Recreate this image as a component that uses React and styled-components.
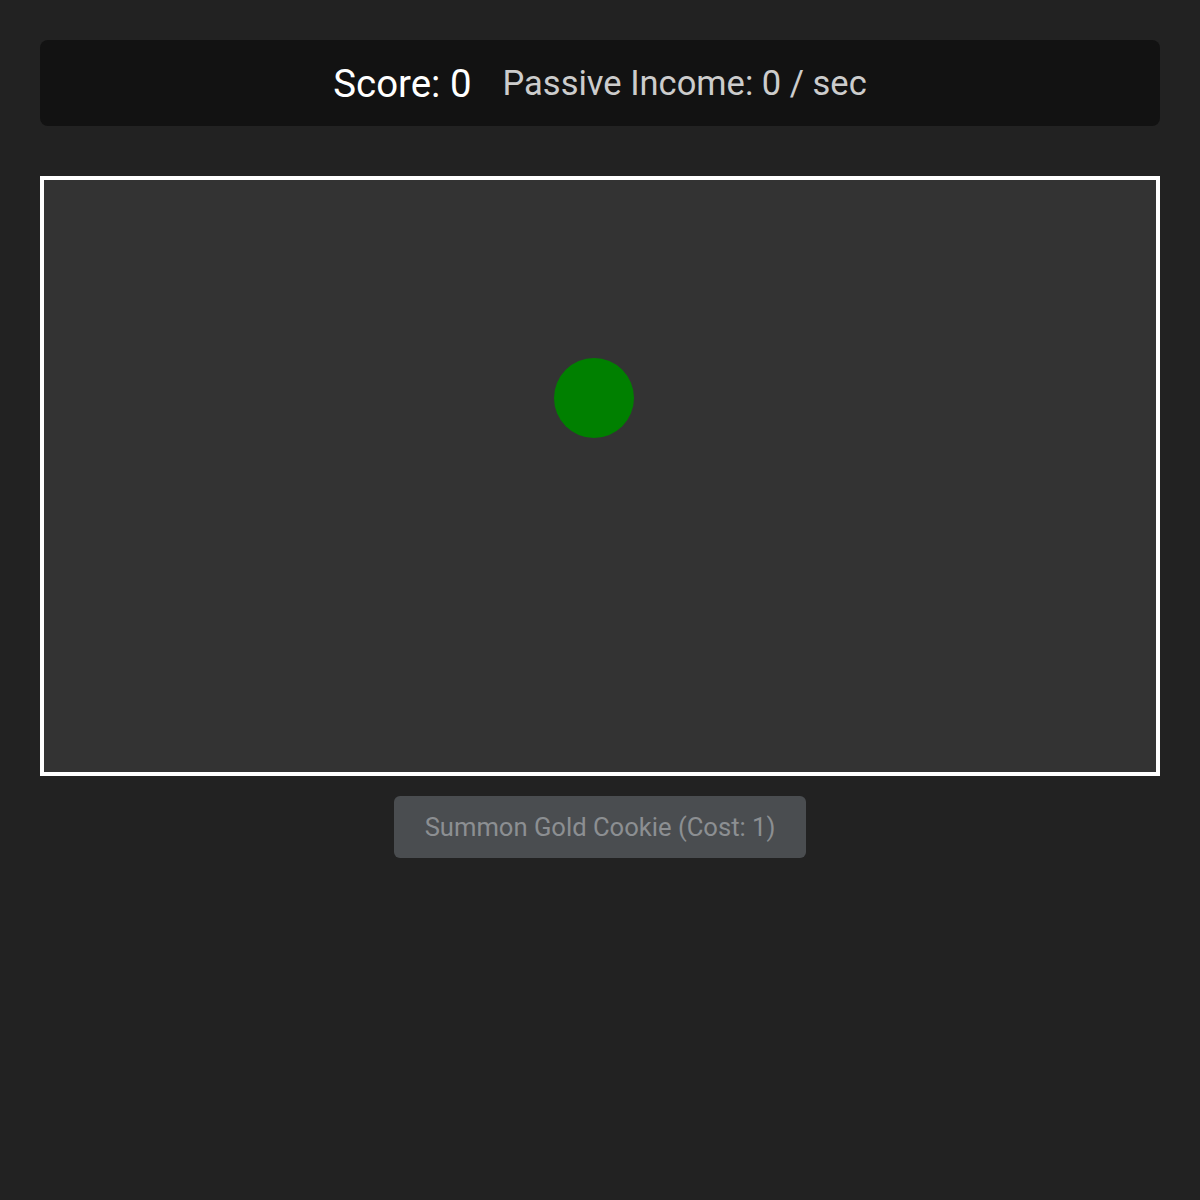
import React from 'react';
import styled, { createGlobalStyle } from 'styled-components';

const GlobalStyle = createGlobalStyle`
  html, body {
    margin: 0;
    padding: 0;
    background: #222222;
    font-family: Roboto, 'Liberation Sans', sans-serif;
  }
`;

const App = () => {
  const score = 0;
  const income = 0;
  const cookie = { x: 550, y: 218 };

  return (
    <>
      <GlobalStyle />
      <Page>
        <ScoreBar>
          <Score>Score: {score}</Score>
          <Income>Passive Income: {income} / sec</Income>
        </ScoreBar>
        <Field>
          <Cookie style={{ left: cookie.x - 40, top: cookie.y - 40 }} />
        </Field>
        <SummonBtn disabled>Summon Gold Cookie (Cost: 1)</SummonBtn>
      </Page>
    </>
  );
};

export default App;

const Page = styled.div`
  min-height: 1200px;
  box-sizing: border-box;
  padding: 40px;
  display: flex;
  flex-direction: column;
  align-items: center;
`;

const ScoreBar = styled.div`
  width: 100%;
  height: 86px;
  box-sizing: border-box;
  background: #121212;
  border-radius: 8px;
  display: flex;
  align-items: center;
  justify-content: center;
  gap: 31px;
`;

const Score = styled.span`
  font-size: 38.4px;
  color: #ffffff;
`;

const Income = styled.span`
  font-size: 34.5px;
  color: #cccccc;
`;

const Field = styled.div`
  position: relative;
  margin-top: 50px;
  width: 100%;
  height: 600px;
  box-sizing: border-box;
  border: 4px solid #ffffff;
  background: #333333;
  overflow: hidden;
`;

const Cookie = styled.div`
  position: absolute;
  width: 80px;
  height: 80px;
  border-radius: 50%;
  background: #008000;
`;

const SummonBtn = styled.button`
  margin-top: 20px;
  width: 412px;
  height: 62px;
  border: none;
  border-radius: 6px;
  background: #4a4d50;
  color: #8c8f92;
  font-family: Roboto, 'Liberation Sans', sans-serif;
  font-size: 25.6px;
  cursor: not-allowed;
`;
